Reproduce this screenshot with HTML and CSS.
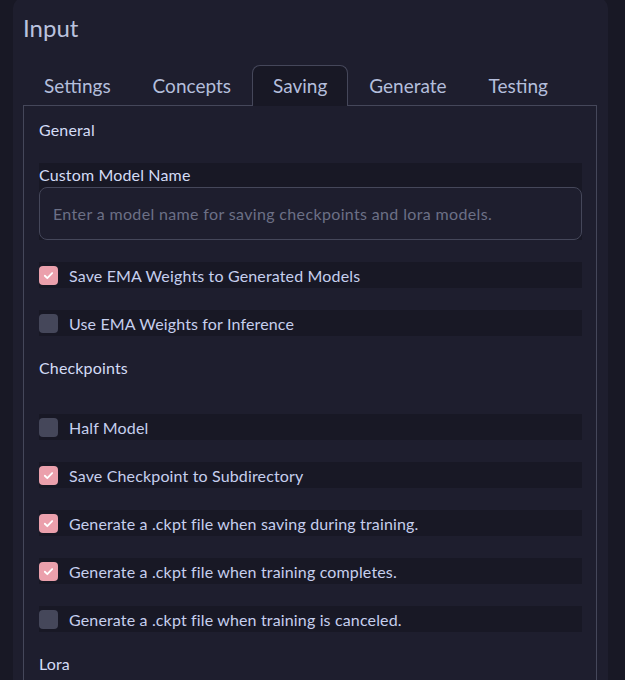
FILE: index.html
```html
<!DOCTYPE html>
<html>
<head>
<meta charset="utf-8">
<link rel="stylesheet" href="styles.css">
</head>
<body>
<div class="panel">
  <div class="title">Input</div>
  <div class="tabs">
    <div class="tab">Settings</div>
    <div class="tab">Concepts</div>
    <div class="tab active">Saving</div>
    <div class="tab">Generate</div>
    <div class="tab">Testing</div>
  </div>
  <div class="content">
    <div class="heading">General</div>
    <div class="field">
      <div class="field-label">Custom Model Name</div>
      <div class="input">Enter a model name for saving checkpoints and lora models.</div>
    </div>
    <div class="check checked"><span class="box"><svg viewBox="0 0 16 16" width="13" height="13"><path d="M3.5 8.3l3 3 6-6.3" fill="none" stroke="#fff" stroke-width="2.2" stroke-linecap="round" stroke-linejoin="round"/></svg></span>Save EMA Weights to Generated Models</div>
    <div class="check"><span class="box"></span>Use EMA Weights for Inference</div>
    <div class="heading h2">Checkpoints</div>
    <div class="check first"><span class="box"></span>Half Model</div>
    <div class="check checked"><span class="box"><svg viewBox="0 0 16 16" width="13" height="13"><path d="M3.5 8.3l3 3 6-6.3" fill="none" stroke="#fff" stroke-width="2.2" stroke-linecap="round" stroke-linejoin="round"/></svg></span>Save Checkpoint to Subdirectory</div>
    <div class="check checked"><span class="box"><svg viewBox="0 0 16 16" width="13" height="13"><path d="M3.5 8.3l3 3 6-6.3" fill="none" stroke="#fff" stroke-width="2.2" stroke-linecap="round" stroke-linejoin="round"/></svg></span>Generate a .ckpt file when saving during training.</div>
    <div class="check checked"><span class="box"><svg viewBox="0 0 16 16" width="13" height="13"><path d="M3.5 8.3l3 3 6-6.3" fill="none" stroke="#fff" stroke-width="2.2" stroke-linecap="round" stroke-linejoin="round"/></svg></span>Generate a .ckpt file when training completes.</div>
    <div class="check"><span class="box"></span>Generate a .ckpt file when training is canceled.</div>
    <div class="heading h3">Lora</div>
  </div>
</div>
</body>
</html>
```
FILE: styles.css
```css
html, body {
  margin: 0;
  padding: 0;
  background: #181825;
  font-family: "Lato", "Liberation Sans", sans-serif;
  color: #cdd6f4;
  overflow: hidden;
  height: 680px;
}
.panel {
  margin: -2px 0 0 13px;
  width: 595px;
  height: 700px;
  background: #1e1e2e;
  border-radius: 10px;
  padding: 0 11px 0 10px;
  box-sizing: border-box;
  overflow: hidden;
}
.title {
  padding-top: 15px;
  font-size: 24px;
  line-height: 30px;
  color: #bac2de;
  height: 30px;
}
.tabs {
  display: flex;
  margin-top: 22px;
  height: 40px;
}
.tab {
  padding: 0 20px;
  font-size: 19px;
  line-height: 40px;
  color: #b4bedc;
  border: 1px solid transparent;
  border-bottom: none;
  border-radius: 8px 8px 0 0;
}
.tab.active {
  background: #181825;
  border-color: #45475a;
  position: relative;
  z-index: 1;
  margin-bottom: -1px;
  height: 41px;
  box-sizing: border-box;
}
.content {
  border: 1px solid #45475a;
  border-bottom: none;
  padding: 12px 14px 0 15px;
  height: 580px;
}
.heading {
  font-size: 16px;
  line-height: 24px;
  color: #d4dcf6;
  letter-spacing: 0.15px;
}
.field {
  margin-top: 21px;
  background: #181825;
  height: 77px;
}
.field-label {
  font-size: 16px;
  line-height: 24px;
  color: #d4dcf6;
  letter-spacing: 0.15px;
}
.input {
  height: 53px;
  box-sizing: border-box;
  border: 1px solid #45475a;
  border-radius: 8px;
  padding: 0 13px;
  line-height: 51px;
  font-size: 16px;
  letter-spacing: 0.35px;
  color: #6c7086;
  background: #1e1e2e;
}
.check {
  display: flex;
  align-items: center;
  height: 26px;
  margin-top: 22px;
  background: #181825;
  font-size: 16px;
  letter-spacing: 0.15px;
  color: #c6cfee;
}
.check .box {
  width: 19px;
  height: 19px;
  border-radius: 4px;
  background: #45475a;
  margin-right: 11px;
  display: flex;
  align-items: center;
  justify-content: center;
  flex: none;
}
.check.checked .box {
  background: #eba0ac;
}
.h2 {
  margin-top: 20px;
}
.check.first {
  margin-top: 34px;
}
.h3 {
  margin-top: 20px;
}
```
